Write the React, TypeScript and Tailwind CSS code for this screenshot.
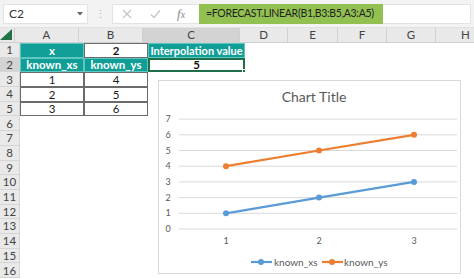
import React from "react";

const TEAL = "bg-[#109e97]";
const rows = Array.from({ length: 16 }, (_, i) => i + 1);
const colWidths = [64, 64, 97, 48, 50, 49, 49, 60];
const colNames = ["A", "B", "C", "D", "E", "F", "G", "H"];

type Cell = { text?: string; cls?: string };

function cellFor(r: number, c: number): Cell {
  const teal = `${TEAL} text-white font-bold border border-[#5fc7c1]`;
  const dark = "bg-white text-[#1a1a1a] border border-[#6b6b6b]";
  if (r === 1) {
    if (c === 0) return { text: "x", cls: teal };
    if (c === 1) return { text: "2", cls: `${dark} font-bold` };
    if (c === 2) return { text: "Interpolation value", cls: `${teal} text-[11px]` };
  }
  if (r === 2) {
    if (c === 0) return { text: "known_xs", cls: teal };
    if (c === 1) return { text: "known_ys", cls: teal };
  }
  if (r >= 3 && r <= 5) {
    const a = ["1", "2", "3"][r - 3];
    const b = ["4", "5", "6"][r - 3];
    if (c === 0) return { text: a, cls: dark };
    if (c === 1) return { text: b, cls: dark };
  }
  return {};
}

function Chart() {
  const ys = [148, 132.3, 116.6, 100.9, 85.2, 69.5, 53.8, 38.1];
  const xs = [67, 160, 255];
  const blue = [1, 2, 3].map((v, i) => [xs[i], ys[v]]);
  const orange = [4, 5, 6].map((v, i) => [xs[i], ys[v]]);
  const font = "Lato, 'Open Sans', sans-serif";
  return (
    <div className="absolute left-[158px] top-[80px] w-[303px] h-[194px] bg-white border border-[#d9d9d9]">
      <svg width="301" height="192" viewBox="0 0 301 192">
        <text x="155" y="21" textAnchor="middle" fontSize="14" fill="#595959" fontFamily={font}>
          Chart Title
        </text>
        {ys.map((y, i) => (
          <g key={i}>
            <line x1="20" x2="298" y1={y} y2={y} stroke="#d9d9d9" strokeWidth="1" />
            <text x="9" y={y + 3} textAnchor="middle" fontSize="9" fill="#595959" fontFamily={font}>
              {i}
            </text>
          </g>
        ))}
        {xs.map((x, i) => (
          <text key={i} x={x} y="163" textAnchor="middle" fontSize="9" fill="#595959" fontFamily={font}>
            {i + 1}
          </text>
        ))}
        <polyline points={blue.map((p) => p.join(",")).join(" ")} fill="none" stroke="#5b9bd5" strokeWidth="2.2" />
        {blue.map((p, i) => (
          <circle key={i} cx={p[0]} cy={p[1]} r="3" fill="#5b9bd5" />
        ))}
        <polyline points={orange.map((p) => p.join(",")).join(" ")} fill="none" stroke="#ed7d31" strokeWidth="2.2" />
        {orange.map((p, i) => (
          <circle key={i} cx={p[0]} cy={p[1]} r="3" fill="#ed7d31" />
        ))}
        <line x1="92" x2="113" y1="181" y2="181" stroke="#5b9bd5" strokeWidth="2.2" />
        <circle cx="102" cy="181" r="3" fill="#5b9bd5" />
        <text x="115" y="184.5" fontSize="10" fill="#595959" fontFamily={font}>
          known_xs
        </text>
        <line x1="163" x2="184" y1="181" y2="181" stroke="#ed7d31" strokeWidth="2.2" />
        <circle cx="173" cy="181" r="3" fill="#ed7d31" />
        <text x="185" y="184.5" fontSize="10" fill="#595959" fontFamily={font}>
          known_ys
        </text>
      </svg>
    </div>
  );
}

export default function App() {
  return (
    <div
      className="relative w-[474px] h-[279px] overflow-hidden bg-white text-[#262626]"
      style={{ fontFamily: "Lato, 'Open Sans', sans-serif" }}
    >
      {/* formula bar */}
      <div className="flex items-center h-[28px] bg-[#f3f3f3] px-[3px] pb-[3px] pt-[3px] border-b border-[#e2e2e2]">
        <div className="flex items-center justify-between w-[85px] h-[20px] bg-white border border-[#e3e3e3] pl-[5px] pr-[4px] text-[12px] text-[#333]">
          <span>C2</span>
          <svg width="6" height="4" viewBox="0 0 6 4">
            <path d="M0 0 L6 0 L3 3.5 Z" fill="#666" />
          </svg>
        </div>
        <div className="w-[24px] flex justify-center text-[#b5b5b5] text-[11px] leading-none">⋮</div>
        <div className="flex items-center flex-1 h-[20px] bg-white border border-[#e3e3e3]">
          <div className="flex items-center w-[86px] h-full text-[#b8b8b8]">
            <svg className="ml-[9px]" width="10" height="10" viewBox="0 0 10 10">
              <path d="M1 1 L9 9 M9 1 L1 9" stroke="#c4c4c4" strokeWidth="1.2" />
            </svg>
            <svg className="ml-[18px]" width="11" height="10" viewBox="0 0 11 10">
              <path d="M1 5.5 L4 8.5 L10 1.5" stroke="#c4c4c4" strokeWidth="1.2" fill="none" />
            </svg>
            <span className="ml-[16px] italic text-[13px] text-[#888]" style={{ fontFamily: "'Liberation Serif', serif" }}>
              f<span className="text-[10px]">x</span>
            </span>
          </div>
          <div className="flex items-center h-[20px] w-[184px] bg-[#92c151] pl-[7px] text-[10.5px] tracking-[-0.3px] text-[#1e1e1e] whitespace-nowrap">
            =FORECAST.LINEAR(B1,B3:B5,A3:A5)
          </div>
        </div>
      </div>

      {/* column header */}
      <div className="flex h-[15px] bg-[#e9e9e9] border-b border-[#cfcfcf] text-[11.5px] text-[#444]">
        <div className="w-[20px] flex items-end justify-end pr-[2px] pb-[2px] border-r border-[#d0d0d0]">
          <svg width="12" height="11" viewBox="0 0 12 11">
            <path d="M12 0 L12 11 L0 11 Z" fill="#217346" />
          </svg>
        </div>
        {colNames.map((n, i) => (
          <div
            key={n}
            style={{ width: colWidths[i] }}
            className={`shrink-0 flex items-center justify-center border-r border-[#d0d0d0] ${
              i === 2 ? "bg-[#d3d3d3]" : ""
            }`}
          >
            {n}
          </div>
        ))}
      </div>

      {/* rows */}
      {rows.map((r) => (
        <div key={r} className="flex h-[14.7px] text-[11.5px]">
          <div
            className={`w-[20px] shrink-0 flex items-center justify-center border-r border-b border-[#d5d5d5] text-[#444] ${
              r === 2 ? "bg-[#d3d3d3]" : "bg-[#e9e9e9]"
            }`}
          >
            {r}
          </div>
          {colNames.map((n, c) => {
            const cell = cellFor(r, c);
            if (r === 2 && c === 2) {
              return (
                <div
                  key={n}
                  style={{ width: colWidths[c] }}
                  className="relative shrink-0 flex items-center justify-center bg-white border-2 border-[#1f6f4a] font-bold text-[#111]"
                >
                  5
                  <div className="absolute right-[-3px] bottom-[-3px] w-[4px] h-[4px] bg-[#1f6f4a] border border-white" />
                </div>
              );
            }
            return (
              <div
                key={n}
                style={{ width: colWidths[c] }}
                className={`shrink-0 flex items-center justify-center leading-none ${cell.cls ?? ""}`}
              >
                {cell.text}
              </div>
            );
          })}
        </div>
      ))}

      <Chart />
    </div>
  );
}
